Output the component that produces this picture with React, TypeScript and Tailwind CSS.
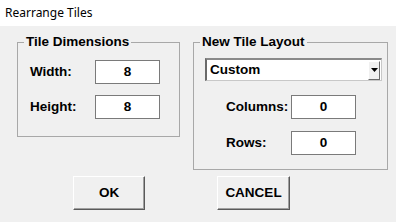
import React from 'react';

const bold = "font-['Liberation_Sans',Arial,sans-serif] font-bold text-[13.5px] leading-[16px] text-black";

const Field = ({ value }: { value: string }) => (
  <div className={`flex h-[24px] w-[65px] items-center justify-center border border-[#7a7a7a] bg-white ${bold}`}>
    {value}
  </div>
);

const Row = ({ label, value, gap }: { label: string; value: string; gap?: string }) => (
  <div className={`flex items-center ${gap ?? ''}`}>
    <span className={`w-[65px] ${bold}`}>{label}</span>
    <Field value={value} />
  </div>
);

const GroupBox = ({
  title,
  className,
  children,
}: {
  title: string;
  className: string;
  children: React.ReactNode;
}) => (
  <div className={`relative border border-[#a8a8a8] ${className}`}>
    <span className={`absolute left-[6px] top-[-9px] bg-[#f0f0f0] px-[2px] ${bold}`}>{title}</span>
    {children}
  </div>
);

const Button = ({ label, className }: { label: string; className: string }) => (
  <button
    className={`flex h-[34px] items-center justify-center border border-t-white border-l-white border-r-[#5a5a5a] border-b-[#5a5a5a] bg-[#f0f0f0] shadow-[inset_-1px_-1px_0_#a0a0a0] ${bold} ${className}`}
  >
    {label}
  </button>
);

export default function App() {
  return (
    <div className="flex h-[222px] w-[396px] flex-col overflow-hidden bg-[#f0f0f0]">
      <div className="flex h-[26px] items-center bg-white pl-[5px] font-['Segoe_UI','Noto_Sans',sans-serif] text-[12px] text-black">
        Rearrange Tiles
      </div>
      <div className="flex items-start gap-[13px] pl-[17px] pt-[16px]">
        <GroupBox title="Tile Dimensions" className="h-[95px] w-[163px] pl-[12px] pt-[17px]">
          <Row label="Width:" value="8" />
          <Row label="Height:" value="8" gap="mt-[11px]" />
        </GroupBox>
        <GroupBox title="New Tile Layout" className="h-[128px] w-[195px] pl-[11px] pt-[15px]">
          <div className="flex h-[23px] w-[177px] items-center justify-between border-l-2 border-t-2 border-r border-b border-l-[#6a6a6a] border-t-[#8a8a8a] border-r-[#c8c8c8] border-b-[#c8c8c8] bg-white pl-[3px] pr-[1px]">
            <span className={bold}>Custom</span>
            <div className="flex h-[19px] w-[12px] items-center justify-center border border-t-white border-l-white border-r-[#6a6a6a] border-b-[#6a6a6a] bg-[#f0f0f0]">
              <svg width="7" height="4" viewBox="0 0 7 4">
                <path d="M0 0h7L3.5 4z" fill="#000" />
              </svg>
            </div>
          </div>
          <div className="ml-[21px] mt-[14px]">
            <Row label="Columns:" value="0" />
            <Row label="Rows:" value="0" gap="mt-[12px]" />
          </div>
        </GroupBox>
      </div>
      <div className="mt-[6px] flex pl-[73px]">
        <Button label="OK" className="w-[72px]" />
        <Button label="CANCEL" className="ml-[72px] w-[73px]" />
      </div>
    </div>
  );
}
